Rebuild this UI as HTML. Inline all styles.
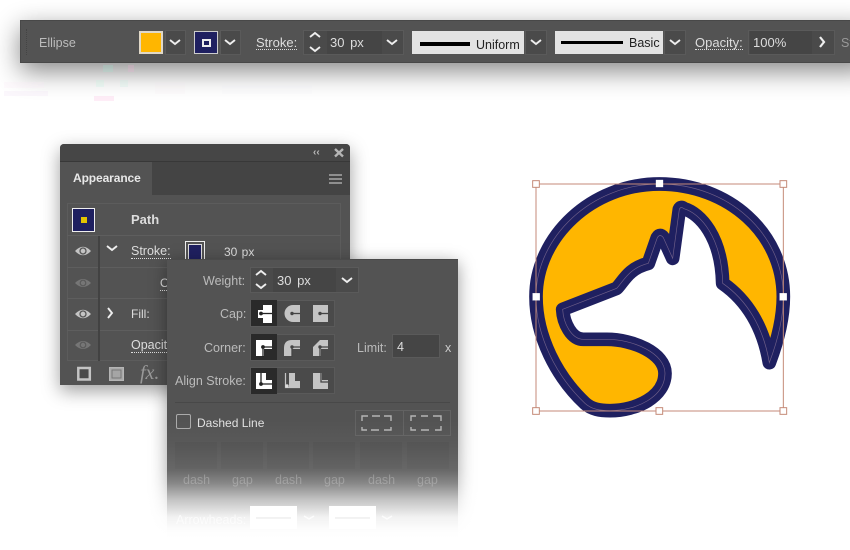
<!DOCTYPE html>
<html><head><meta charset="utf-8">
<style>
html,body{margin:0;padding:0;background:#fff}
#s{position:relative;width:850px;height:550px;overflow:hidden;background:#fff;font-family:"Liberation Sans",sans-serif;font-size:12px;color:#ccc}
.a{position:absolute}
.t{position:absolute;white-space:nowrap;line-height:14px}
.u{border-bottom:1px dotted #ddd;line-height:13px;color:#ddd}
.b{position:absolute;background:#4a4a4a;border:1px solid #5a5a5a;box-sizing:border-box}
.i{position:absolute;background:#454545;box-sizing:border-box}
svg{position:absolute;overflow:visible}
.ch{fill:none;stroke:#eee;stroke-width:1.900}
</style></head><body><div id="s">

<!-- toolbar -->
<div class="a" style="left:20px;top:20px;width:850px;height:43px;background:#535353;border:1px solid #484848;box-sizing:border-box;box-shadow:0 8px 26px rgba(0,0,0,.48)"></div>
<div class="a" style="left:26px;top:29px;height:26px;border-left:1px dotted #444"></div>
<div class="t" style="left:39px;top:36px;color:#bcbcbc;font-size:12.5px">Ellipse</div>
<div class="a" style="left:139px;top:31px;width:24px;height:23px;background:#ffb600;border:2px solid #e0d8c8;box-sizing:border-box"></div>
<div class="b" style="left:165px;top:30px;width:21px;height:25px"></div>
<div class="a" style="left:194px;top:31px;width:24px;height:23px;background:#1f2060;border:1px solid #ccc;box-sizing:border-box"></div>
<div class="a" style="left:202px;top:39px;width:5px;height:4px;border:2px solid #eee;box-sizing:content-box"></div>
<div class="b" style="left:220px;top:30px;width:21px;height:25px"></div>
<div class="t u" style="left:256px;top:36px;font-size:13px">Stroke:</div>
<div class="b" style="left:303px;top:30px;width:101px;height:25px"></div>
<div class="i" style="left:327px;top:31px;width:55px;height:23px"></div>
<div class="t" style="left:330px;top:36px;color:#ddd;font-size:13px;word-spacing:2px">30 px</div>
<div class="a" style="left:412px;top:31px;width:112px;height:23px;background:#e3e3e3"></div>
<div class="a" style="left:420px;top:42px;width:50px;height:3.500px;background:#000"></div>
<div class="t" style="left:476px;top:38px;color:#222;font-size:12.5px">Uniform</div>
<div class="b" style="left:525px;top:30px;width:22px;height:25px"></div>
<div class="a" style="left:555px;top:31px;width:108px;height:23px;background:#e3e3e3"></div>
<div class="a" style="left:561px;top:41px;width:62px;height:2.500px;background:#000"></div>
<div class="t" style="left:629px;top:36px;color:#222;font-size:12.5px">Basic</div>
<div class="b" style="left:664px;top:30px;width:22px;height:25px"></div>
<div class="t u" style="left:695px;top:36px;font-size:13px">Opacity:</div>
<div class="b" style="left:748px;top:30px;width:87px;height:25px"></div>
<div class="i" style="left:750px;top:31px;width:62px;height:23px"></div>
<div class="t" style="left:753px;top:36px;color:#ddd;font-size:13px">100%</div>
<div class="t" style="left:841px;top:36px;color:#999;font-size:12.5px">St</div>
<svg style="left:0;top:0" width="850" height="60"><path class="ch" d="M170 40l5 4 5-4M225 40l5 4 5-4M387 40l5 4 5-4M531 40l5 4 5-4M670 40l5 4 5-4M310 37l5-4 5 4M310 47l5 4 5-4"/><path d="M820 37l4 5-4 5" fill="none" stroke="#eee" stroke-width="2.200"/></svg>

<!-- ghost noise -->
<div class="a" style="left:4px;top:82px;width:40px;height:6px;background:rgba(250,230,245,.22)"></div>
<div class="a" style="left:4px;top:91px;width:44px;height:5px;background:rgba(240,225,245,.25)"></div>
<div class="a" style="left:103px;top:65px;width:10px;height:7px;background:rgba(150,235,210,.2)"></div>
<div class="a" style="left:128px;top:65px;width:6px;height:7px;background:rgba(250,170,215,.2)"></div>
<div class="a" style="left:96px;top:80px;width:8px;height:7px;background:rgba(190,245,225,.22)"></div>
<div class="a" style="left:120px;top:80px;width:8px;height:7px;background:rgba(190,240,225,.2)"></div>
<div class="a" style="left:94px;top:96px;width:20px;height:5px;background:rgba(250,190,225,.28)"></div>
<div class="a" style="left:155px;top:82px;width:30px;height:12px;background:rgba(245,230,240,.12)"></div>
<div class="a" style="left:222px;top:82px;width:90px;height:12px;background:rgba(240,235,245,.12)"></div>

<!-- Appearance panel -->
<div class="a" style="left:60px;top:144px;width:290px;height:241px;background:#535353;border-radius:4px 4px 0 0;box-shadow:0 6px 18px rgba(0,0,0,.38);overflow:hidden">
 <div class="a" style="left:0;top:0;width:290px;height:17px;background:#464646;border-bottom:1px solid #383838"></div>
 <div class="a" style="left:0;top:18px;width:290px;height:33px;background:#444"></div>
 <div class="a" style="left:0;top:18px;width:92px;height:33px;background:#535353"></div>
 <div class="t" style="left:13px;top:27px;color:#e8e8e8;font-size:12px;font-weight:bold;letter-spacing:-.1px">Appearance</div>
 <div class="a" style="left:269px;top:30px;width:13px;height:1.500px;background:#8f8f8f;box-shadow:0 4px #8f8f8f,0 8px #8f8f8f"></div>
 <div class="a" style="left:7px;top:59px;width:274px;height:158px;border:1px solid #5c5c5c;box-sizing:border-box"></div>
 <div class="a" style="left:7px;top:91px;width:274px;height:1px;background:#5e5e5e"></div>
 <div class="a" style="left:7px;top:123px;width:274px;height:1px;background:#5e5e5e"></div>
 <div class="a" style="left:7px;top:154px;width:274px;height:1px;background:#5e5e5e"></div>
 <div class="a" style="left:7px;top:186px;width:274px;height:1px;background:#5e5e5e"></div>
 <div class="a" style="left:38px;top:92px;width:2px;height:125px;background:#424242"></div>
 <div class="a" style="left:12px;top:64px;width:23px;height:24px;background:#1f2060;border:1px solid #eee;box-sizing:border-box"></div>
 <div class="a" style="left:21px;top:73px;width:6px;height:6px;background:#e3c400"></div>
 <div class="t" style="left:71px;top:69px;color:#ddd;font-size:13px;font-weight:bold">Path</div>
 <div class="t u" style="left:71px;top:101px;font-size:12.5px">Stroke:</div>
 <div class="a" style="left:125px;top:97px;width:20px;height:22px;border:1px solid #eee;box-sizing:border-box;padding:2px"><div style="width:14px;height:16px;background:#1f2060;border:1px solid #ddd;box-sizing:border-box"></div></div>
 <div class="t" style="left:164px;top:101px;color:#ddd;word-spacing:1px">30 px</div>
 <div class="t u" style="left:100px;top:133px">O</div>
 <div class="t" style="left:71px;top:163px;color:#ddd">Fill:</div>
 <div class="t u" style="left:71px;top:195px;font-size:12.5px">Opacity</div>
 <svg style="left:0;top:0" width="290" height="241">
  <path d="M47 102l5 4 5-4" fill="none" stroke="#eee" stroke-width="1.900"/>
  <path d="M48 164l4 5-4 5" fill="none" stroke="#eee" stroke-width="1.900"/>
  <path d="M15 107q8-8.500 16 0q-8 8.500-16 0z" fill="#c4c4c4"/><circle cx="23" cy="107" r="3" fill="#c4c4c4" stroke="#555" stroke-width="1.300"/>
  <path d="M15 170q8-8.500 16 0q-8 8.500-16 0z" fill="#c4c4c4"/><circle cx="23" cy="170" r="3" fill="#c4c4c4" stroke="#555" stroke-width="1.300"/>
  <path d="M15 139q8-8 16 0q-8 8-16 0z" fill="#767676"/><circle cx="23" cy="139" r="2.800" fill="#767676" stroke="#5a5a5a" stroke-width="1.200"/>
  <path d="M15 201q8-8 16 0q-8 8-16 0z" fill="#767676"/><circle cx="23" cy="201" r="2.800" fill="#767676" stroke="#5a5a5a" stroke-width="1.200"/>
  <rect x="18.300" y="224" width="11.500" height="11.500" fill="#4a4a4a" stroke="#c4c4c4" stroke-width="2.500"/>
  <rect x="49.500" y="223.500" width="14" height="13" fill="#aaa" stroke="#b5b5b5"/>
  <rect x="52" y="226" width="9" height="8" fill="#a5a5a5" stroke="#777"/>
 </svg>
 <div class="t" style="left:80px;top:221px;color:#999;font:italic 20px/16px 'Liberation Serif',serif">fx.</div>
</div>
<div class="a" style="left:313px;top:148px;color:#bbb;font-size:10px;line-height:10px;font-weight:bold">‹‹</div>
<svg style="left:0;top:0" width="350" height="160"><path d="M335 149l8 7.500M343 149l-8 7.500" stroke="#b5b5b5" stroke-width="2.400" fill="none"/></svg>

<!-- flyout -->
<div class="a" style="left:167px;top:259px;width:291px;height:291px;background:#535353;border-top:1px solid #4a4a4a;box-sizing:border-box;box-shadow:0 4px 16px rgba(0,0,0,.4)"></div>
<div class="t" style="left:203px;top:274px;color:#bbb;font-size:12.5px">Weight:</div>
<div class="b" style="left:250px;top:267px;width:109px;height:26px"></div>
<div class="i" style="left:273px;top:268px;width:63px;height:24px"></div>
<div class="t" style="left:277px;top:274px;color:#ddd;font-size:13px;word-spacing:2px">30 px</div>
<div class="t" style="left:220px;top:307px;color:#bbb;font-size:12.5px">Cap:</div>
<div class="t" style="left:204px;top:341px;color:#bbb;font-size:12.5px">Corner:</div>
<div class="t" style="left:175px;top:374px;color:#bbb;font-size:12.5px">Align Stroke:</div>
<div class="b" style="left:250px;top:300px;width:85px;height:27px"></div>
<div class="b" style="left:250px;top:334px;width:85px;height:27px"></div>
<div class="b" style="left:250px;top:367px;width:85px;height:27px"></div>
<div class="a" style="left:251px;top:300px;width:26px;height:26px;background:#2a2a2a"></div>
<div class="a" style="left:251px;top:334px;width:26px;height:26px;background:#2a2a2a"></div>
<div class="a" style="left:251px;top:368px;width:26px;height:26px;background:#2a2a2a"></div>
<svg style="left:0;top:0" width="460" height="440">
 <path class="ch" d="M256 275l5-4 5 4M256 284l5 4 5-4M342 278l5 4 5-4"/>
 <!-- cap -->
 <path d="M263 305h9v18h-9v-5h-5v-8h5z" fill="#fff"/><path d="M261 313.500h11" stroke="#222" stroke-width="1.300"/><circle cx="261" cy="313.500" r="1.900" fill="#222"/>
 <path d="M293 305h7v17h-7a8.500 8.500 0 0 1 0-17z" fill="#c4c4c4"/><path d="M292 313.500h8" stroke="#444" stroke-width="1.300"/><circle cx="292" cy="313.500" r="1.700" fill="#444"/>
 <rect x="313" y="305" width="15" height="17" fill="#c4c4c4"/><path d="M320 313.500h8" stroke="#444" stroke-width="1.300"/><circle cx="320" cy="313.500" r="1.700" fill="#444"/>
 <!-- corner -->
 <path d="M256 340h16v9h-8v7h-8z" fill="#fff"/><path d="M263 347h9M263 347v10" stroke="#222" stroke-width="1.300"/><circle cx="263" cy="347" r="1.900" fill="#222"/>
 <path d="M284 356v-8q0-8 8-8h8v9h-8v7z" fill="#c4c4c4"/><path d="M292 347h8M292 347v10" stroke="#444" stroke-width="1.300"/><circle cx="292" cy="347" r="1.700" fill="#444"/>
 <path d="M313 356v-9l7-7h8v9h-7v7z" fill="#c4c4c4"/><path d="M320 347h8M320 347v10" stroke="#444" stroke-width="1.300"/><circle cx="320" cy="347" r="1.700" fill="#444"/>
 <!-- align -->
 <path d="M256 373h10v7h6v9h-16z" fill="#fff"/><path d="M261 373v11h11" stroke="#222" stroke-width="1.300" fill="none"/><circle cx="261" cy="384" r="1.900" fill="#222"/>
 <path d="M289 373h6v8h5v6h-11z" fill="#c4c4c4"/><path d="M285.500 373v14.500h14.500" stroke="#c4c4c4" stroke-width="1.200" fill="none"/><circle cx="287" cy="386" r="1.700" fill="#ddd"/>
 <path d="M313 373h9v7h6v9h-15z" fill="#c4c4c4"/><path d="M321 373v9h7" stroke="#444" stroke-width="1.300" fill="none"/>
 <path d="M355.500 410.500h95v25h-95zM403.500 410.500v25" fill="none" stroke="#626262"/>
 <path d="M362 421v-5h6M372 416h8M384 416h7v5M391 427v3h-7M379 430h-8M367 430h-5v-3M411 421v-5h5M421 416h7M433 416h8v5M441 426v4h-6M429 430h-8M416 430h-5v-3" fill="none" stroke="#b5b5b5" stroke-width="1.400"/>
</svg>
<div class="t" style="left:357px;top:341px;color:#bbb;font-size:12.5px">Limit:</div>
<div class="i" style="left:392px;top:334px;width:48px;height:24px;border:1px solid #5a5a5a"></div>
<div class="t" style="left:397px;top:340px;color:#ddd;font-size:12.5px">4</div>
<div class="t" style="left:445px;top:341px;color:#ccc;font-size:12.5px">x</div>
<div class="a" style="left:175px;top:402px;width:275px;height:1px;background:#484848"></div>
<div class="a" style="left:176px;top:414px;width:15px;height:15px;border:1px solid #aaa;border-radius:2px;box-sizing:border-box"></div>
<div class="t" style="left:197px;top:416px;color:#e0e0e0;font-size:12px">Dashed Line</div>
<div class="i" style="left:175px;top:442px;width:42px;height:27px;background:#4f4f4f"></div>
<div class="i" style="left:221px;top:442px;width:42px;height:27px;background:#4f4f4f"></div>
<div class="i" style="left:267px;top:442px;width:42px;height:27px;background:#4f4f4f"></div>
<div class="i" style="left:313px;top:442px;width:42px;height:27px;background:#4f4f4f"></div>
<div class="i" style="left:360px;top:442px;width:42px;height:27px;background:#4f4f4f"></div>
<div class="i" style="left:407px;top:442px;width:42px;height:27px;background:#4f4f4f"></div>
<div class="t" style="left:183px;top:473px;color:#7c7c7c;font-size:12.5px">dash</div>
<div class="t" style="left:232px;top:473px;color:#7c7c7c;font-size:12.5px">gap</div>
<div class="t" style="left:275px;top:473px;color:#7c7c7c;font-size:12.5px">dash</div>
<div class="t" style="left:324px;top:473px;color:#7c7c7c;font-size:12.5px">gap</div>
<div class="t" style="left:368px;top:473px;color:#7c7c7c;font-size:12.5px">dash</div>
<div class="t" style="left:417px;top:473px;color:#7c7c7c;font-size:12.5px">gap</div>
<div class="t" style="left:176px;top:513px;color:#ccc;font-size:12.5px">Arrowheads:</div>
<div class="a" style="left:250px;top:506px;width:47px;height:23px;background:#fff"></div>
<div class="a" style="left:329px;top:506px;width:47px;height:23px;background:#fff"></div>
<div class="a" style="left:256px;top:517px;width:35px;height:2px;background:#555"></div>
<div class="a" style="left:335px;top:517px;width:35px;height:2px;background:#555"></div>
<svg style="left:0;top:0" width="460" height="550"><path d="M304 516l5 3 5-3M382 516l5 3 5-3" fill="none" stroke="#ddd" stroke-width="1.600"/></svg>
<!-- fade -->
<div class="a" style="left:140px;top:420px;width:350px;height:130px;background:linear-gradient(to bottom,rgba(255,255,255,0) 0,rgba(255,255,255,.04) 25px,rgba(255,255,255,.12) 50px,rgba(255,255,255,.3) 63px,rgba(255,255,255,.66) 80px,rgba(255,255,255,.92) 97px,rgba(255,255,255,.99) 110px,#fff 118px)"></div>

<!-- artwork -->
<svg style="left:520px;top:170px" width="280" height="255" viewBox="0 0 840 765">
 <path d="M748 578C770 520 790 450 790 380C790 190 625 42 418 42C215 42 48 200 48 380C48 500 110 620 195 700C215 718 240 722 270 722C350 722 435 680 435 610C435 550 340 508 260 508L190 508C155 508 130 460 128 418L290 355C310 335 325 295 385 280L412 203Q420 190 430 203L458 265L478 118Q482 108 492 116C540 130 605 200 608 340C680 390 730 470 748 578Z" fill="#ffb600" stroke="#1f2060" stroke-width="41" stroke-linejoin="round"/>
 <path d="M748 578C770 520 790 450 790 380C790 190 625 42 418 42C215 42 48 200 48 380C48 500 110 620 195 700C215 718 240 722 270 722C350 722 435 680 435 610C435 550 340 508 260 508L190 508C155 508 130 460 128 418L290 355C310 335 325 295 385 280L412 203Q420 190 430 203L458 265L478 118Q482 108 492 116C540 130 605 200 608 340C680 390 730 470 748 578Z" fill="none" stroke="#6f5f88" stroke-width="2"/>
 <rect x="48" y="42" width="742" height="681" fill="none" stroke="#c58a78" stroke-width="3"/>
 <g fill="#fff" stroke="#c58a78" stroke-width="3">
  <rect x="38" y="32" width="20" height="20"/><rect x="780" y="32" width="20" height="20"/>
  <rect x="38" y="713" width="20" height="20"/><rect x="780" y="713" width="20" height="20"/>
  <rect x="408" y="713" width="20" height="20"/>
 </g>
 <g fill="#fff" stroke="#ffffff" stroke-width="1">
  <rect x="408" y="30" width="21" height="21"/><rect x="38" y="370" width="21" height="21"/><rect x="779" y="370" width="21" height="21"/>
 </g>
</svg>
</div></body></html>
